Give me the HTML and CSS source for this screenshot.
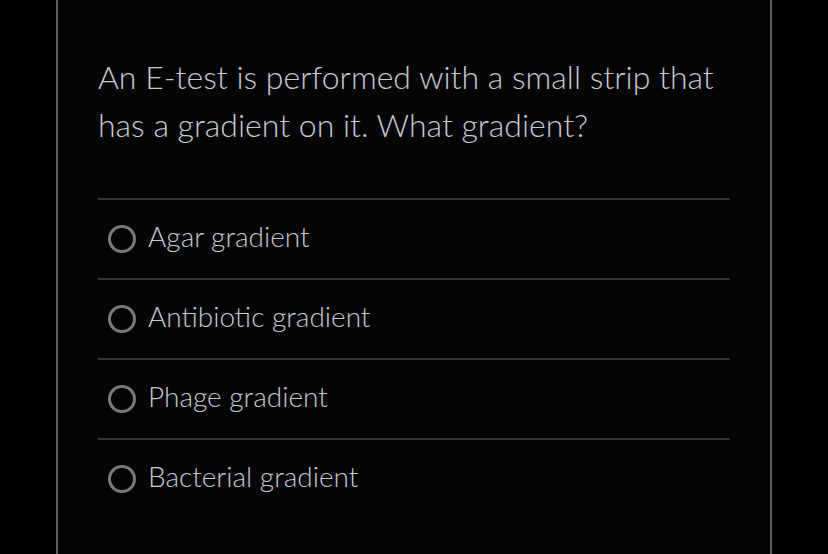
FILE: index.html
```html
<!DOCTYPE html>
<html>
<head>
<meta charset="utf-8">
<link rel="stylesheet" href="styles.css">
</head>
<body>
<div class="card">
  <p class="question">An E-test is performed with a small strip that has a gradient on it. What gradient?</p>
  <ul class="options">
    <li class="option"><span class="radio"></span><span class="label">Agar gradient</span></li>
    <li class="option"><span class="radio"></span><span class="label">Antibiotic gradient</span></li>
    <li class="option"><span class="radio"></span><span class="label">Phage gradient</span></li>
    <li class="option"><span class="radio"></span><span class="label">Bacterial gradient</span></li>
  </ul>
</div>
</body>
</html>
```
FILE: styles.css
```css
html, body {
  margin: 0;
  padding: 0;
  background: #000;
  height: 100%;
}
body {
  font-family: Lato, "Open Sans", sans-serif;
  color: #c6cbd3;
  overflow: hidden;
}
.card {
  margin-left: 56px;
  width: 716px;
  height: 100%;
  border-left: 2px solid #5c5c5c;
  border-right: 2px solid #5c5c5c;
  background: #050505;
  padding: 53px 40px 0 40px;
  box-sizing: border-box;
}
.question {
  margin: 0;
  font-size: 32px;
  font-weight: 300;
  line-height: 48px;
}
.options {
  list-style: none;
  margin: 49px 0 0 0;
  padding: 0;
}
.option {
  display: flex;
  align-items: center;
  height: 80px;
  border-top: 2px solid #333;
  box-sizing: border-box;
}
.radio {
  width: 22px;
  height: 22px;
  border: 3px solid #7a7a7a;
  border-radius: 50%;
  margin-left: 10px;
  margin-right: 12px;
  flex: none;
}
.label {
  font-size: 28px;
  font-weight: 300;
  margin-top: -7px;
}
```
